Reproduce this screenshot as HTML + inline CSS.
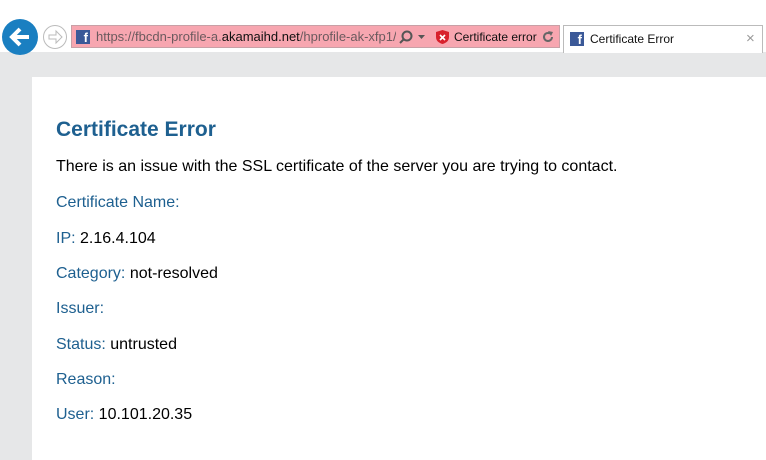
<!DOCTYPE html>
<html><head><style>
*{margin:0;padding:0;box-sizing:border-box}
body{width:766px;height:460px;overflow:hidden;background:#fff;font-family:"Liberation Sans",sans-serif;position:relative}
.abs{position:absolute}
.gray{left:0;top:52px;width:766px;height:408px;background:#e6e7e8}
.page{left:32px;top:77px;width:734px;height:383px;background:#fff}
.addr{left:71px;top:25px;width:489px;height:23px;background:#f7a6b0;border:1px solid #c8a0a6}
.tab{left:563px;top:25px;width:200px;height:28px;background:#fff;border:1px solid #bbb;border-bottom:none}
.fb{width:14px;height:14px;background:#3b5998;color:#fff;font:bold 13px "Liberation Sans";text-align:right;padding-right:2px;line-height:16px;overflow:hidden}
.line{position:absolute;left:56px;font-size:16px;color:#000;white-space:nowrap}
.k{color:#1e6090}
</style></head><body>
<div class="abs gray"></div>
<div class="abs page"></div>
<svg class="abs" style="left:1px;top:18px" width="38" height="38"><circle cx="19" cy="19" r="18" fill="#1a7fc1"/><path d="M28 19H12M19 11l-8 8 8 8" stroke="#fff" stroke-width="4" fill="none"/></svg>
<svg class="abs" style="left:42px;top:24px" width="26" height="26"><circle cx="13" cy="13" r="11.5" fill="#fff" stroke="#bbb"/><path d="M7 11h7v-4l6 6-6 6v-4H7z" fill="none" stroke="#bbb"/></svg>
<div class="abs addr"></div>
<div class="abs fb" style="left:76px;top:30px">f</div>
<div class="abs" style="left:96px;top:29px;font-size:13px;color:#6b5a5e;white-space:nowrap;width:300px;overflow:hidden">https://fbcdn-profile-a.<span style="color:#111">akamaihd.net</span>/hprofile-ak-xfp1/v/</div>
<svg class="abs" style="left:399px;top:30px" width="30" height="14"><circle cx="8" cy="6" r="4.5" fill="none" stroke="#555" stroke-width="2"/><path d="M5 9l-4 4" stroke="#555" stroke-width="2"/><path d="M19 5h7l-3.5 4z" fill="#555"/></svg>
<svg class="abs" style="left:436px;top:30px" width="13" height="14"><path d="M6.5 0L13 2v5c0 4-3 6-6.5 7C3 13 0 11 0 7V2z" fill="#d8202c"/><path d="M4 5l5 5M9 5l-5 5" stroke="#fff" stroke-width="1.6"/></svg>
<div class="abs" style="left:454px;top:30px;font-size:12px;color:#111">Certificate error</div>
<svg class="abs" style="left:542px;top:30px" width="13" height="14"><path d="M10 7a4 4 0 1 1-2-3.5" fill="none" stroke="#666" stroke-width="2"/><path d="M6 1l5 1-2 4z" fill="#666"/></svg>
<div class="abs tab"></div>
<div class="abs fb" style="left:570px;top:32px">f</div>
<div class="abs" style="left:590px;top:32px;font-size:12px;color:#111">Certificate Error</div>
<div class="abs" style="left:746px;top:30px;font-size:15px;color:#999">×</div>
<div class="line" style="top:118px;font-size:21px;font-weight:bold;color:#1e6090">Certificate Error</div>
<div class="line" style="top:158px">There is an issue with the SSL certificate of the server you are trying to contact.</div>
<div class="line k" style="top:194px">Certificate Name:</div>
<div class="line" style="top:230px"><span class="k">IP:</span> 2.16.4.104</div>
<div class="line" style="top:265px"><span class="k">Category:</span> not-resolved</div>
<div class="line k" style="top:300px">Issuer:</div>
<div class="line" style="top:336px"><span class="k">Status:</span> untrusted</div>
<div class="line k" style="top:371px">Reason:</div>
<div class="line" style="top:406px"><span class="k">User:</span> 10.101.20.35</div>
</body></html>
